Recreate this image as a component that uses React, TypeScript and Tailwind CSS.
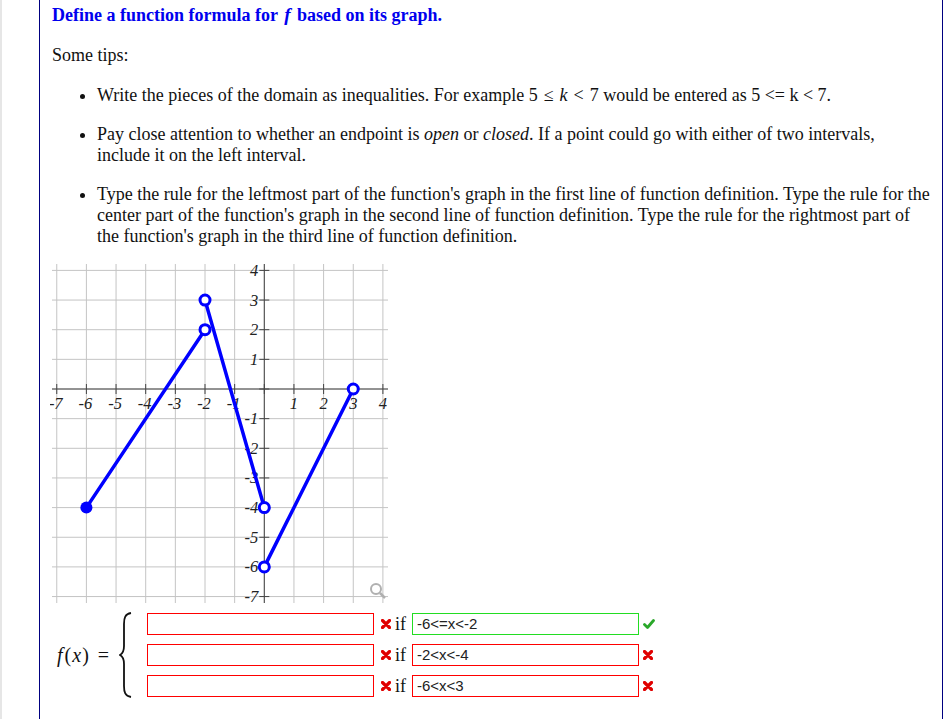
const U = 29.65;
const OX = 214.3;
const OY = 127;
const X = (x: number) => OX + U * x;
const Y = (y: number) => OY - U * y;

const ticks = [-7, -6, -5, -4, -3, -2, -1, 0, 1, 2, 3, 4];

function Graph() {
  return (
    <svg width="342" height="346" viewBox="0 0 342 346" className="block">
      {ticks.map((t) => (
        <line key={"v" + t} x1={X(t)} y1={2} x2={X(t)} y2={341} stroke="#c4c4c4" strokeWidth="1" />
      ))}
      {ticks.map((t) => (
        <line key={"h" + t} x1={2} y1={Y(t)} x2={338} y2={Y(t)} stroke="#c4c4c4" strokeWidth="1" />
      ))}
      <line x1={2} y1={OY} x2={338} y2={OY} stroke="#444" strokeWidth="1" />
      <line x1={OX} y1={2} x2={OX} y2={341} stroke="#444" strokeWidth="1" />
      {ticks.map((t) => (
        <line key={"tx" + t} x1={X(t)} y1={OY - 5} x2={X(t)} y2={OY + 5} stroke="#444" strokeWidth="1" />
      ))}
      {ticks.map((t) => (
        <line key={"ty" + t} x1={OX - 5} y1={Y(t)} x2={OX + 5} y2={Y(t)} stroke="#444" strokeWidth="1" />
      ))}
      <g fontFamily="'Liberation Serif', serif" fontStyle="italic" fontSize="16.5" fill="#222">
        {ticks
          .filter((t) => t !== 0)
          .map((t) => (
            <text key={"lx" + t} x={X(t) + (t < 0 ? -1 : 0)} y={OY + 20} textAnchor="middle">
              {t < 0 ? "-" + -t : t}
            </text>
          ))}
        {ticks
          .filter((t) => t !== 0)
          .map((t) => (
            <text key={"ly" + t} x={OX - 6} y={Y(t) + 5.5} textAnchor="end">
              {t < 0 ? "-" + -t : t}
            </text>
          ))}
      </g>
      <g stroke="#0000ff" strokeWidth="3.5" strokeLinecap="round">
        <line x1={X(-6)} y1={Y(-4)} x2={X(-2)} y2={Y(2)} />
        <line x1={X(-2)} y1={Y(3)} x2={X(0)} y2={Y(-4)} />
        <line x1={X(0)} y1={Y(-6)} x2={X(3)} y2={Y(0)} />
      </g>
      <circle cx={X(-6)} cy={Y(-4)} r="6" fill="#0000ff" />
      {[
        [-2, 2],
        [-2, 3],
        [0, -4],
        [0, -6],
        [3, 0],
      ].map(([a, b]) => (
        <circle key={a + "," + b} cx={X(a)} cy={Y(b)} r="5" fill="#fff" stroke="#0000ff" strokeWidth="3" />
      ))}
      <g stroke="#b0b0b0" fill="none" strokeWidth="2">
        <circle cx="326" cy="327" r="5" />
        <line x1="330" y1="331" x2="335" y2="336" strokeWidth="2.5" />
      </g>
    </svg>
  );
}

function Cross() {
  return (
    <svg width="10" height="10" viewBox="0 0 10 10" className="shrink-0">
      <path d="M1.5 1.5 L8.5 8.5 M8.5 1.5 L1.5 8.5" stroke="#e00000" strokeWidth="3.2" strokeLinecap="round" />
    </svg>
  );
}

function Check() {
  return (
    <svg width="12" height="10" viewBox="0 0 12 10" className="shrink-0">
      <path d="M1.5 5.5 L4.5 8.5 L10.5 1.5" stroke="#2aa82a" strokeWidth="2.8" fill="none" strokeLinecap="round" strokeLinejoin="round" />
    </svg>
  );
}

const rows = [
  { cond: "-6<=x<-2", ok: true },
  { cond: "-2<x<-4", ok: false },
  { cond: "-6<x<3", ok: false },
];

function Row({ cond, ok }: { cond: string; ok: boolean }) {
  return (
    <div className="flex items-center h-[22px]">
      <div className="w-[227px] h-[22px] border border-[#ff0000] bg-white" />
      <div className="ml-[7px]">
        <Cross />
      </div>
      <span className="ml-[4px] w-[11px] text-[18px] leading-none">if</span>
      <div
        className={`ml-[6px] w-[227px] h-[22px] border ${ok ? "border-[#22dd22]" : "border-[#ff0000]"} flex items-center pl-[4px] text-[15px] text-[#222] font-['Liberation_Sans',sans-serif]`}
      >
        {cond}
      </div>
      <div className="ml-[4px]">{ok ? <Check /> : <Cross />}</div>
    </div>
  );
}

export default function App() {
  return (
    <div className="flex min-h-screen bg-white font-['Liberation_Serif',serif] text-[18px] text-[#111]">
      <div className="w-[2px] bg-[#e6e6e6]" />
      <div className="ml-[37px] w-[904px] border-l border-r border-[#000080] pl-[12px] pr-[12px] pt-[5px]">
        <h2 className="font-bold text-[#0000ee] leading-[21px]">
          Define a function formula for <i className="mx-[2px] text-[19px] leading-none">f</i> based on its graph.
        </h2>
        <p className="mt-[19px] leading-[21px]">Some tips:</p>
        <ul className="list-disc pl-[45px] mt-[19px] leading-[21px] space-y-[18px]">
          <li>
            Write the pieces of the domain as inequalities. For example 5<span className="mx-[6px]">≤</span>
            <i>k</i>
            <span className="mx-[6px]">&lt;</span>7 would be entered as 5 &lt;= k &lt; 7.
          </li>
          <li>
            Pay close attention to whether an endpoint is <i>open</i> or <i>closed</i>. If a point could go with
            either of two intervals, include it on the left interval.
          </li>
          <li>
            Type the rule for the leftmost part of the function's graph in the first line of function definition.
            Type the rule for the center part of the function's graph in the second line of function definition.
            Type the rule for the rightmost part of the function's graph in the third line of function definition.
          </li>
        </ul>
        <div className="mt-[15px] -ml-[2px]">
          <Graph />
        </div>
        <div className="flex items-center mt-[4px]">
          <div className="ml-[5px] w-[60px] flex items-baseline whitespace-nowrap text-[20px] leading-none">
            <i className="mr-[2px]">f</i>
            <span>(</span>
            <i className="mx-[1px]">x</i>
            <span>)</span>
            <span className="ml-[9px]">=</span>
          </div>
          <svg width="14" height="86" viewBox="0 0 14 86" className="ml-[2px]">
            <path
              d="M12 1 C6 2 5 6 5 12 L5 34 C5 39 3 42 1 43 C3 44 5 47 5 52 L5 74 C5 80 6 84 12 85"
              stroke="#111"
              strokeWidth="1.8"
              fill="none"
            />
          </svg>
          <div className="ml-[14px] flex flex-col gap-[9px]">
            {rows.map((r) => (
              <Row key={r.cond} cond={r.cond} ok={r.ok} />
            ))}
          </div>
        </div>
      </div>
    </div>
  );
}
